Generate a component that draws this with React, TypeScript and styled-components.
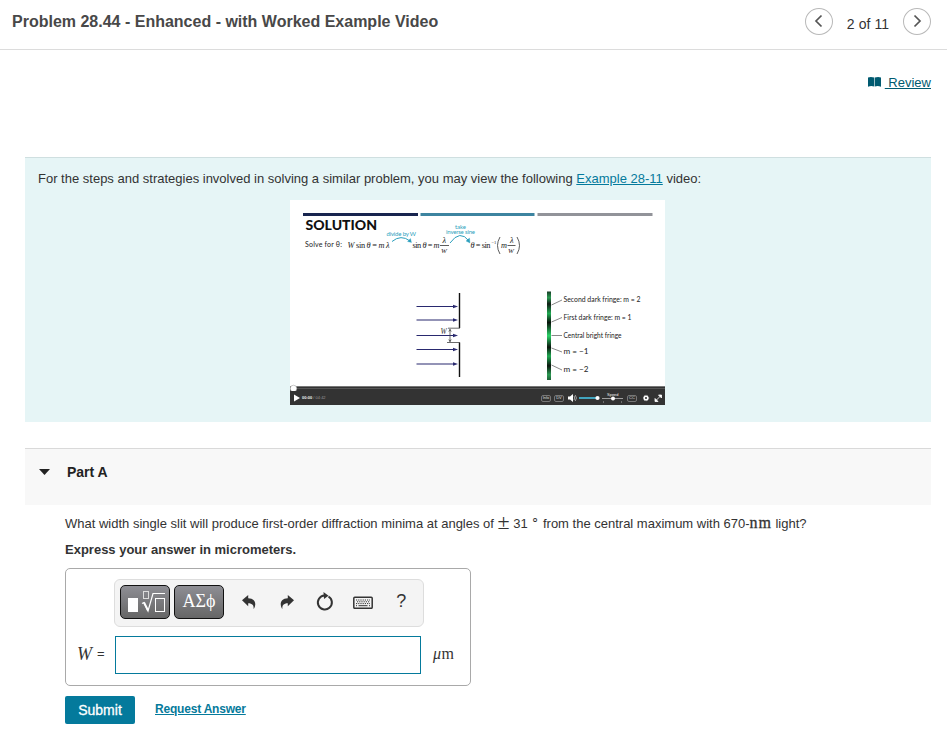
import React from 'react';
import styled, { createGlobalStyle } from 'styled-components';

const GlobalStyle = createGlobalStyle`
  *, *::before, *::after { box-sizing: border-box; }
  body {
    margin: 0;
    background: #fff;
    color: #333;
    font: 13px/18px "Liberation Sans", Arial, sans-serif;
    overflow: hidden;
  }
`;

const Page = styled.div`
  width: 947px;
  height: 754px;
`;

const Header = styled.header`
  display: flex;
  justify-content: space-between;
  height: 50px;
  padding: 7px 16px 0 12px;
  border-bottom: 1px solid #dcdcdc;
`;

const Title = styled.h1`
  margin: 5px 0 0;
  font-size: 16px;
  line-height: 20px;
  color: #484848;
`;

const Pager = styled.nav`
  display: flex;
  height: 28px;
  align-items: center;
`;

const PagerButton = styled.button`
  display: flex;
  align-items: center;
  justify-content: center;
  width: 28px;
  height: 27px;
  padding: 0;
  border: 1px solid #b9b9b9;
  border-radius: 50%;
  background: #fff;
`;

const PagerText = styled.span`
  width: 70px;
  padding-top: 5px;
  text-align: center;
  font-size: 14px;
  letter-spacing: 0.1px;
`;

const ReviewRow = styled.div`
  display: flex;
  justify-content: flex-end;
  align-items: center;
  height: 20px;
  margin: 23px 16px 0 0;
`;

const Link = styled.a<{ $bold?: boolean }>`
  color: ${(p) => (p.$bold ? '#057a9b' : '#047a9c')};
  font-weight: ${(p) => (p.$bold ? 700 : 400)};
  font-size: ${(p) => (p.$bold ? '12px' : 'inherit')};
  text-decoration: underline;
`;

const ReviewLink = styled(Link)`
  margin-left: 4px;
  color: #005a70;
  white-space: pre;
`;

const BookIcon = styled.svg`
  margin-bottom: 2px;
`;

const Intro = styled.section`
  height: 265px;
  margin: 64px 16px 0 25px;
  padding-top: 12px;
  border-top: 1px solid #cfdfe0;
  background: #e6f5f6;
`;

const IntroText = styled.p`
  margin: 0 0 12px 13px;
  white-space: nowrap;
`;

const Player = styled.div`
  width: 375px;
  height: 205px;
  margin-left: 265px;
  background: #fff;
`;

const Slide = styled.svg`
  display: block;
`;

const Controls = styled.div`
  display: flex;
  align-items: center;
  height: 14px;
  padding: 0 0 0 4px;
  background: #333;
  color: #ddd;
  font-size: 4px;
  line-height: 6px;
`;

const TimeText = styled.span`
  flex: 1;
  margin-left: 2px;
  color: #999;
`;

const Elapsed = styled.b`
  color: #eee;
`;

const Pill = styled.span<{ $gap: number }>`
  display: flex;
  align-items: center;
  justify-content: center;
  width: 10px;
  height: 7px;
  margin-right: ${(p) => p.$gap}px;
  border: 1px solid #777;
  border-radius: 2px;
`;

const PartHeader = styled.section`
  display: flex;
  align-items: flex-start;
  height: 57px;
  margin: 26px 16px 0 25px;
  padding: 14px 0 0 14px;
  border-top: 1px solid #d9d9d9;
  background: #f8f8f8;
`;

const PartTitle = styled.h2`
  margin: 0 0 0 17px;
  color: #222;
  font-size: 14px;
  line-height: 18px;
`;

const Body = styled.main`
  padding: 10px 0 0 65px;
`;

const Question = styled.p`
  height: 18px;
  margin: 0;
  white-space: nowrap;
`;

const PlusMinus = styled.span`
  font: 22px/0 "Liberation Serif", serif;
  vertical-align: -1px;
`;

const Unit = styled.span`
  font: 16px/0 "Liberation Serif", serif;
  letter-spacing: 0.9px;
  -webkit-text-stroke: 0.3px #333;
`;

const Degree = styled.sup`
  font: 13px/0 "Liberation Serif", serif;
  vertical-align: 5px;
`;

const Instruction = styled.p`
  margin: 8px 0 9px;
  font-weight: 700;
`;

const AnswerBox = styled.div`
  width: 406px;
  height: 118px;
  padding: 10px 0 0 11px;
  border: 1px solid #a9a9a9;
  border-radius: 5px;
`;

const Toolbar = styled.div`
  display: flex;
  align-items: center;
  width: 310px;
  height: 48px;
  margin-left: 37px;
  padding: 0 5px 2px;
  border: 1px solid #ddd;
  border-radius: 6px;
  background: #f4f4f4;
`;

const DarkButton = styled.button`
  display: flex;
  flex: none;
  align-items: center;
  justify-content: center;
  width: 50px;
  height: 34px;
  margin-right: 4px;
  padding: 0 0 2px;
  border: 1px solid #111;
  border-radius: 5px;
  background: linear-gradient(#8e8e94, #666);
  color: #fff;
  font: 18px/20px "Liberation Serif", serif;
`;

const IconButton = styled.button`
  display: flex;
  flex: none;
  align-items: center;
  justify-content: center;
  width: 38.200px;
  height: 34px;
  padding: 0 0 1px;
  border: 0;
  background: none;
  color: #333;
  font: 18px "Liberation Sans", Arial, sans-serif;

  &:nth-child(3) { margin-left: 1.500px; }
`;

const InputRow = styled.div`
  display: flex;
  align-items: center;
  height: 38px;
  margin-top: 9px;
`;

const Label = styled.label`
  display: flex;
  gap: 5px;
  width: 38px;
  padding-bottom: 3px;
  font-size: 13px;
  line-height: 20px;
  white-space: nowrap;
`;

const Variable = styled.i`
  font: italic 18px/20px "Liberation Serif", serif;
`;

const Field = styled.input`
  width: 306px;
  height: 38px;
  border: 1px solid #047a9c;
  background: #fff;
  outline: 0;
`;

const FieldUnit = styled.span`
  margin: 0 0 2px 12px;
  font: 16px/18px "Liberation Serif", serif;
  letter-spacing: 0.4px;
`;

const Actions = styled.div`
  display: flex;
  align-items: center;
  gap: 20px;
  margin-top: 10px;
`;

const Submit = styled.button`
  width: 70px;
  height: 28px;
  padding: 0;
  border: 0;
  border-radius: 2px;
  background: #047a9c;
  color: #fff;
  font: 14px "Liberation Sans", Arial, sans-serif;
  -webkit-text-stroke: 0.3px #fff;
`;

const RequestLink = styled(Link)`
  margin-bottom: 2px;
  letter-spacing: -0.2px;
`;

const rays = [106.5, 120, 135.5, 149.5, 164];

const labels = [
  { text: 'Second dark fringe: m = 2', y: 102, width: 77, from: 105, to: 100 },
  { text: 'First dark fringe: m = 1', y: 119.5, width: 68, from: 122, to: 117.5 },
  { text: 'Central bright fringe', y: 138, width: 58, from: 135.5, to: 135.5 },
  { text: 'm = −1', y: 154, width: 25, from: 148, to: 152 },
  { text: 'm = −2', y: 172, width: 25, from: 165, to: 170 },
];

function SlideArt() {
  const serif = 'Liberation Serif, serif';
  const sans = 'Lato, sans-serif';
  return (
    <Slide width="375" height="191" viewBox="0 0 375 191">
      <defs>
        <linearGradient id="fringe" x1="0" y1="0" x2="0" y2="1">
          <stop offset="0" stopColor="#173c26" />
          <stop offset=".07" stopColor="#2a9a52" />
          <stop offset=".14" stopColor="#101c14" />
          <stop offset=".25" stopColor="#1faa52" />
          <stop offset=".35" stopColor="#08120b" />
          <stop offset=".5" stopColor="#2bd468" />
          <stop offset=".63" stopColor="#09140c" />
          <stop offset=".73" stopColor="#1faa52" />
          <stop offset=".84" stopColor="#0a150d" />
          <stop offset=".94" stopColor="#2a9a52" />
          <stop offset="1" stopColor="#1f6038" />
        </linearGradient>
      </defs>
      <rect x="13" y="13" width="115" height="3" fill="#18254f" />
      <rect x="130.500" y="13" width="114" height="3" fill="#3d84a0" />
      <rect x="247.500" y="13" width="115" height="3" fill="#929399" />
      <text x="15.500" y="30" fontFamily={sans} fontWeight="900" fontSize="12.500" fill="#111" textLength="71.500" lengthAdjust="spacingAndGlyphs">SOLUTION</text>
      <g fill="#2c9fbd" fontFamily={sans} fontSize="6">
        <text x="96.500" y="35.500" textLength="29.500">divide by W</text>
        <text x="165" y="28.500" textLength="11">take</text>
        <text x="156" y="34" textLength="29">inverse sine</text>
      </g>
      <g fill="none" stroke="#2c9fbd">
        <path d="M102 41.500Q111 34 120 41M160 43Q170 29 179 41" />
        <path d="M121.500 42.500l-4-1 3-3zM180 43l-4-2 3.500-3z" fill="#2c9fbd" strokeWidth=".3" />
      </g>
      <text x="15" y="46.500" fontFamily={sans} fontSize="7" fill="#222" textLength="37">Solve for θ:</text>
      <g fontFamily={serif} fontSize="8.300" fill="#222">
        <text x="57.500" y="47.500" textLength="42"><tspan fontStyle="italic">W</tspan> sin <tspan fontStyle="italic">θ</tspan> = <tspan fontStyle="italic">m λ</tspan></text>
        <text x="122.500" y="47.500" textLength="27">sin <tspan fontStyle="italic">θ</tspan> = <tspan fontStyle="italic">m</tspan></text>
        <text x="152.500" y="43" fontStyle="italic">λ</text>
        <text x="151" y="53" fontStyle="italic" fontSize="7">W</text>
        <text x="180.500" y="47.500" textLength="20"><tspan fontStyle="italic">θ</tspan> = sin</text>
        <text x="201.500" y="44" fontSize="4.500">−1</text>
        <text x="211" y="47.500" fontStyle="italic">m</text>
        <text x="220" y="43" fontStyle="italic">λ</text>
        <text x="218" y="53" fontStyle="italic" fontSize="7">W</text>
      </g>
      <path d="M150 45.500h9M217.500 45.500h8M210 37q-5 8.500 0 17M227 37q5 8.500 0 17" stroke="#333" strokeWidth=".8" fill="none" />
      {rays.map((y) => (
        <g key={y}>
          <path d={`M126.500 ${y}H163`} stroke="#29296f" strokeWidth="1.100" />
          <path d={`M168 ${y}l-5-1.700v3.400z`} fill="#29296f" />
        </g>
      ))}
      <path d="M169.500 93v35M169.500 142.500v34.500" stroke="#111" strokeWidth="1.400" />
      <path d="M158 128.200h12M157 142.500h13M160 129v13M158.800 131.500l1.200-2 1.200 2M158.800 139.500l1.200 2 1.200-2" stroke="#444" strokeWidth=".8" fill="none" />
      <text x="150.500" y="134" fontFamily={serif} fontStyle="italic" fontSize="7.500" fill="#333">W</text>
      <rect x="257" y="91.500" width="4" height="88.500" fill="url(#fringe)" />
      {labels.map((l) => (
        <g key={l.text}>
          <path d={`M261.500 ${l.from}L272 ${l.to}`} stroke="#555" strokeWidth=".7" />
          <text x="273.500" y={l.y} fontFamily={sans} fontSize="6.800" fill="#222" textLength={l.width} lengthAdjust="spacingAndGlyphs">{l.text}</text>
        </g>
      ))}
      <rect y="186" width="375" height="5" fill="#333" />
      <path d="M0 186.500h375" stroke="#777" />
      <path d="M3 188.500h372" stroke="#555" />
      <circle cx="3.500" cy="188.500" r="3.300" fill="#fff" stroke="#777" strokeWidth=".4" />
    </Slide>
  );
}

function Chevron({ right = false }: { right?: boolean }) {
  return (
    <svg width="10" height="14" viewBox="0 0 10 14" fill="none" stroke="#555" strokeWidth="1.700">
      <path d={right ? 'M2.500 1.500L8 7 2.500 12.500' : 'M7.500 1.500L2 7 7.500 12.500'} />
    </svg>
  );
}

function PlayerControls() {
  return (
    <Controls>
      <svg width="6" height="8" viewBox="0 0 6 8"><path d="M0 .5l6 3.500-6 3.500z" fill="#fff" /></svg>
      <TimeText><Elapsed>00:00</Elapsed> / 04:42</TimeText>
      <Pill $gap={3}>Info</Pill>
      <Pill $gap={4}>DV</Pill>
      <svg width="59" height="14" viewBox="0 0 59 14">
        <path d="M0 5.500h2l3-2.500v8L2 8.500H0z" fill="#fff" />
        <path d="M6 5q1.500 2 0 4M7.200 4q2.500 3 0 6" fill="none" stroke="#ccc" strokeWidth=".7" />
        <path d="M11 7h18" stroke="#42a5bf" strokeWidth="2" />
        <circle cx="29.500" cy="7" r="2.100" fill="#fff" />
        <path d="M34 7.500h21" stroke="#bbb" strokeWidth=".8" />
        <circle cx="45" cy="7.500" r="2" fill="#fff" />
        <text x="39" y="4.500" fontSize="4" fill="#eee">Speed</text>
        <path d="M35 11h1M53 11h1" stroke="#aaa" />
      </svg>
      <Pill $gap={6}>CC</Pill>
      <svg width="22" height="10" viewBox="0 0 22 10">
        <circle cx="3" cy="5" r="1.800" fill="none" stroke="#fff" strokeWidth="1.500" />
        <circle cx="3" cy="5" r="2.700" fill="none" stroke="#eee" strokeWidth=".6" strokeDasharray="1 .7" />
        <path d="M12.500 8l5.500-5.500M12 5.500V8.500h3zM15.500 2H18.500v3z" stroke="#fff" strokeWidth=".8" fill="#fff" />
      </svg>
    </Controls>
  );
}

function TemplateIcon() {
  return (
    <svg width="40" height="26" viewBox="0 0 40 26" fill="none" stroke="#fff">
      <rect x="3" y="10" width="10" height="14" fill="#fff" stroke="none" />
      <rect x="18.500" y="3.500" width="5" height="7" stroke="#ddd" />
      <path d="M17 15.500l2-1 4 8.500 5-17.500H40" strokeWidth="1.200" />
      <path d="M19 14.500l4 8" strokeWidth="2" />
      <rect x="30.500" y="10.500" width="9" height="13" />
    </svg>
  );
}

function ArrowIcon({ forward = false }: { forward?: boolean }) {
  return (
    <svg width="16" height="16" viewBox="0 0 16 16">
      <path transform={forward ? 'translate(16 0) scale(-1 1)' : undefined} d="M1 6.200L7.200 1v3.200c5 .2 7.500 3 7 6.800-.2 1.800-.7 3-1.600 4 .4-3.500-1.200-5.700-5.400-5.700v3z" fill="#333" />
    </svg>
  );
}

function ResetIcon() {
  return (
    <svg width="20" height="20" viewBox="0 0 20 20">
      <path d="M13.500 4.500A7 7 0 1 1 9.500 3.500" fill="none" stroke="#333" strokeWidth="2" />
      <path d="M8.500 0l5 3.700-4.500 3.300z" fill="#333" />
    </svg>
  );
}

function KeyboardIcon() {
  return (
    <svg width="20" height="14" viewBox="0 0 20 14" fill="none" stroke="#333">
      <rect x=".8" y="2.300" width="18.400" height="11" rx="1" strokeWidth="1.500" />
      <path d="M3 5h14M4 6.800h13M3 8.600h14" strokeDasharray="1.200 1" strokeWidth="1" />
      <path d="M5.500 10.700h9M3 10.700h1M16 10.700h1" />
    </svg>
  );
}

export default function App() {
  return (
    <Page>
      <GlobalStyle />
      <Header>
        <Title>Problem 28.44 - Enhanced - with Worked Example Video</Title>
        <Pager>
          <PagerButton aria-label="Previous"><Chevron /></PagerButton>
          <PagerText>2 of 11</PagerText>
          <PagerButton aria-label="Next"><Chevron right /></PagerButton>
        </Pager>
      </Header>
      <ReviewRow>
        <BookIcon width="13" height="10" viewBox="0 0 13 10">
          <path d="M0 .5Q3-.3 6.200.6V9.500Q3 8.600 0 9.700zM6.800.6Q10-.3 13 .5V9.700Q10 8.600 6.800 9.500z" fill="#005a70" />
        </BookIcon>
        <ReviewLink> Review</ReviewLink>
      </ReviewRow>
      <Intro>
        <IntroText>
          For the steps and strategies involved in solving a similar problem, you may view the following <Link>Example 28-11</Link> video:
        </IntroText>
        <Player>
          <SlideArt />
          <PlayerControls />
        </Player>
      </Intro>
      <PartHeader>
        <svg width="11" height="18" viewBox="0 0 11 18"><path d="M0 6h11L5.500 12z" fill="#222" /></svg>
        <PartTitle>Part A</PartTitle>
      </PartHeader>
      <Body>
        <Question>
          What width single slit will produce first-order diffraction minima at angles of <PlusMinus>±</PlusMinus> 31 <Degree>∘</Degree> from the central maximum with 670-<Unit>nm</Unit> light?
        </Question>
        <Instruction>Express your answer in micrometers.</Instruction>
        <AnswerBox>
          <Toolbar>
            <DarkButton aria-label="Templates"><TemplateIcon /></DarkButton>
            <DarkButton>ΑΣϕ</DarkButton>
            <IconButton aria-label="Undo"><ArrowIcon /></IconButton>
            <IconButton aria-label="Redo"><ArrowIcon forward /></IconButton>
            <IconButton aria-label="Reset"><ResetIcon /></IconButton>
            <IconButton aria-label="Keyboard"><KeyboardIcon /></IconButton>
            <IconButton>?</IconButton>
          </Toolbar>
          <InputRow>
            <Label><Variable>W</Variable> =</Label>
            <Field />
            <FieldUnit><i>μ</i>m</FieldUnit>
          </InputRow>
        </AnswerBox>
        <Actions>
          <Submit>Submit</Submit>
          <RequestLink $bold>Request Answer</RequestLink>
        </Actions>
      </Body>
    </Page>
  );
}
